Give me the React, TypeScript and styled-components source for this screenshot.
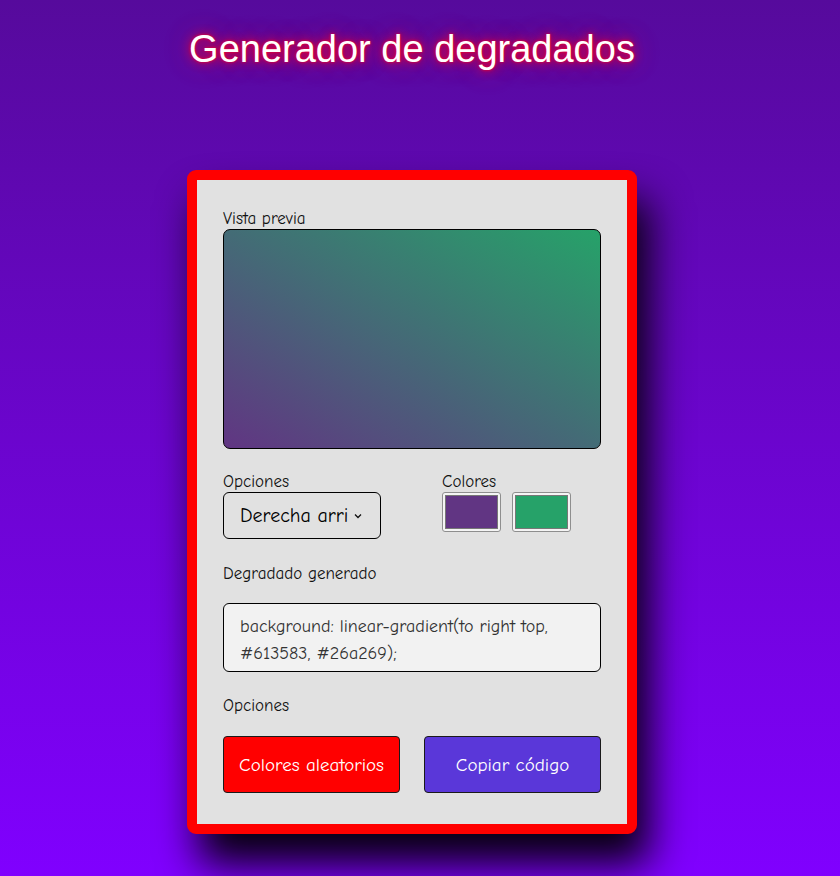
import styled, { createGlobalStyle } from "styled-components";

// ========================================================================================= //
// [ GLOBAL ] ============================================================================== //
// ========================================================================================= //

const GlobalStyle = createGlobalStyle`
  html, body {
    margin: 0;
    padding: 0;
    min-height: 100%;
  }
  body {
    min-height: 876px;
    background: linear-gradient(to bottom, #560a9c, #8000ff);
    font-family: "Comic Sans MS", "Comic Neue", "Noto Sans", sans-serif;
    color: #111;
  }
`;

const handFont = `"Comic Sans MS", "Comic Neue", "Noto Sans", sans-serif`;

// ========================================================================================= //
// [ STYLED COMPONENTS ] =================================================================== //
// ========================================================================================= //

const Page = styled.main`
  display: flex;
  flex-direction: column;
  align-items: center;
  padding-right: 16px;
  padding-bottom: 43px;
`;

const Title = styled.h1`
  margin: 28px 0 0;
  font-family: "Liberation Sans", Arial, sans-serif;
  font-size: 38px;
  font-weight: 400;
  color: #fff;
  text-shadow: 0 0 3px #ff0020, 0 0 10px rgba(255, 0, 30, 0.85),
    0 0 20px rgba(255, 0, 60, 0.55), 0 0 32px rgba(255, 0, 90, 0.3);
`;

const Card = styled.section`
  width: 450px;
  box-sizing: border-box;
  margin-top: 99px;
  padding: 29px 26px 31px;
  background: #e1e1e1;
  border: 10px solid #ff0000;
  border-radius: 9px;
  box-shadow: 12px 30px 40px rgba(0, 0, 0, 0.95);
`;

const Label = styled.span`
  display: block;
  font-family: ${handFont};
  font-size: 17px;
  line-height: 20px;
  color: #111;
`;

const Preview = styled.div<{ $from: string; $to: string }>`
  box-sizing: border-box;
  height: 220px;
  border: 1px solid #000;
  border-radius: 7px;
  background: linear-gradient(to right top, ${(p) => p.$from}, ${(p) => p.$to});
`;

const OptionsRow = styled.div`
  display: grid;
  grid-template-columns: 219px 1fr;
  margin-top: 23px;
`;

const Field = styled.div`
  display: flex;
  flex-direction: column;
`;

const SelectBox = styled.div`
  position: relative;
  width: 158px;
  height: 47px;

  svg {
    position: absolute;
    top: 21px;
    left: 131px;
    pointer-events: none;
  }
`;

const Select = styled.select`
  appearance: none;
  box-sizing: border-box;
  width: 100%;
  height: 100%;
  padding: 0 32px 0 16px;
  font-family: ${handFont};
  font-size: 20px;
  color: #000;
  background: transparent;
  border: 1px solid #000;
  border-radius: 6px;
`;

const Swatches = styled.div`
  display: flex;
  gap: 11px;
`;

const Swatch = styled.div<{ $color: string }>`
  box-sizing: border-box;
  width: 59px;
  height: 40px;
  padding: 2px;
  border: 1px solid #8e8e8e;
  border-radius: 3px;
  background: #f4f4f4;

  &::after {
    content: "";
    display: block;
    height: 100%;
    background: ${(p) => p.$color};
    border: 1px solid #777;
    box-sizing: border-box;
  }
`;

const Section = styled.div<{ $top: number }>`
  margin-top: ${(p) => p.$top}px;
`;

const Code = styled.div`
  box-sizing: border-box;
  height: 69px;
  margin-top: 19px;
  padding: 9px 16px 0;
  font-family: ${handFont};
  font-size: 18px;
  line-height: 27px;
  color: #333;
  background: #f2f2f2;
  border: 1px solid #000;
  border-radius: 6px;
  overflow: hidden;
`;

const Buttons = styled.div`
  display: grid;
  grid-template-columns: 1fr 1fr;
  gap: 24px;
  margin-top: 20px;
`;

const Button = styled.button<{ $tone: "red" | "blue" }>`
  height: 57px;
  font-family: ${handFont};
  font-size: 19px;
  color: #fff;
  background: ${(p) => (p.$tone === "red" ? "#ff0000" : "#5a37d9")};
  border: 1px solid #1a1a1a;
  border-radius: 4px;
  cursor: pointer;
`;

// ========================================================================================= //
// [ EXPORTED COMPONENT ] ================================================================== //
// ========================================================================================= //

const colorOne = "#613583";
const colorTwo = "#26a269";

export default function App() {
  return (
    <>
      <GlobalStyle />
      <Page>
        <Title>Generador de degradados</Title>
        <Card>
          <Label>Vista previa</Label>
          <Preview $from={colorOne} $to={colorTwo} />

          <OptionsRow>
            <Field>
              <Label>Opciones</Label>
              <SelectBox>
                <Select defaultValue="to right top">
                  <option value="to right top">Derecha arriba</option>
                  <option value="to right">Derecha</option>
                  <option value="to top">Arriba</option>
                </Select>
                <svg width="8" height="6" viewBox="0 0 8 6">
                  <path d="M1 1.5 L4 4.5 L7 1.5" fill="none" stroke="#111" strokeWidth="1.3" />
                </svg>
              </SelectBox>
            </Field>
            <Field>
              <Label>Colores</Label>
              <Swatches>
                <Swatch $color={colorOne} />
                <Swatch $color={colorTwo} />
              </Swatches>
            </Field>
          </OptionsRow>

          <Section $top={25}>
            <Label>Degradado generado</Label>
            <Code>
              background: linear-gradient(to right top, {colorOne}, {colorTwo});
            </Code>
          </Section>

          <Section $top={24}>
            <Label>Opciones</Label>
            <Buttons>
              <Button $tone="red">Colores aleatorios</Button>
              <Button $tone="blue">Copiar código</Button>
            </Buttons>
          </Section>
        </Card>
      </Page>
    </>
  );
}
